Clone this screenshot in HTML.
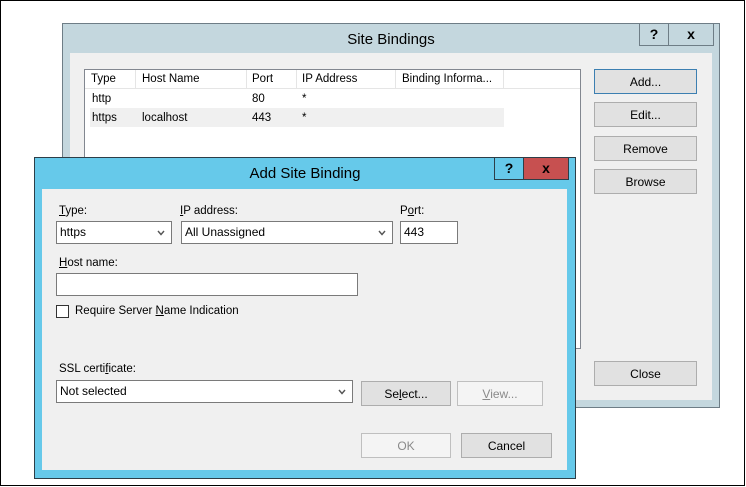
<!DOCTYPE html><html><head><style>
body{margin:0;width:746px;height:487px;background:#fff;position:relative;overflow:hidden;font-family:"Liberation Sans",sans-serif;font-size:11.5px;color:#000}
.a{position:absolute;box-sizing:border-box}
.btn{position:absolute;box-sizing:border-box;background:#e1e1e1;border:1px solid #adadad;text-align:center;font-size:12px}
.in{position:absolute;box-sizing:border-box;background:#fff;border:1px solid #7a7a7a;padding:3px 3px;font-size:12px}
.ar{position:absolute;right:6px;top:8px;width:8px;height:6px}
</style></head><body>
<div class="a" style="left:0;top:0;width:745px;height:486px;border:1px solid #000"></div>
<!-- Site Bindings -->
<div class="a" style="left:62px;top:23px;width:658px;height:385px;background:#c4d7de;border:1px solid #6e7d86"></div>
<div class="a" style="left:62px;top:25px;width:658px;text-align:center;font-size:15px;line-height:30px">Site Bindings</div>
<div class="a" style="left:639px;top:23px;width:30px;height:23px;border:1px solid #6e7d86;text-align:center;font-weight:bold;line-height:20px;font-size:14px">?</div>
<div class="a" style="left:668px;top:23px;width:46px;height:23px;border:1px solid #6e7d86;text-align:center;font-weight:bold;line-height:20px;font-size:14px">x</div>
<div class="a" style="left:70px;top:53px;width:642px;height:347px;background:#f0f0f0"></div>
<div class="a" style="left:84px;top:69px;width:497px;height:280px;background:#fff;border:1px solid #828790"></div>
<div class="a" style="left:85px;top:70px;width:495px;height:19px;border-bottom:1px solid #e5e5e5"></div>
<div class="a" style="left:91px;top:73px">Type</div><div class="a" style="left:135px;top:70px;height:19px;border-left:1px solid #e5e5e5"></div>
<div class="a" style="left:142px;top:73px">Host Name</div><div class="a" style="left:246px;top:70px;height:19px;border-left:1px solid #e5e5e5"></div>
<div class="a" style="left:252px;top:73px">Port</div><div class="a" style="left:296px;top:70px;height:19px;border-left:1px solid #e5e5e5"></div>
<div class="a" style="left:302px;top:73px">IP Address</div><div class="a" style="left:395px;top:70px;height:19px;border-left:1px solid #e5e5e5"></div>
<div class="a" style="left:402px;top:73px">Binding Informa...</div><div class="a" style="left:503px;top:70px;height:19px;border-left:1px solid #e5e5e5"></div>
<div class="a" style="left:92px;top:93px">http</div><div class="a" style="left:252px;top:93px">80</div><div class="a" style="left:302px;top:93px">*</div>
<div class="a" style="left:90px;top:108px;width:414px;height:19px;background:#f0f0f0"></div>
<div class="a" style="left:92px;top:112px">https</div><div class="a" style="left:142px;top:112px">localhost</div><div class="a" style="left:252px;top:112px">443</div><div class="a" style="left:302px;top:112px">*</div>
<div class="btn" style="left:594px;top:69px;width:103px;height:25px;line-height:24px;border-color:#3c7fb1">Add...</div>
<div class="btn" style="left:594px;top:102px;width:103px;height:25px;line-height:24px">Edit...</div>
<div class="btn" style="left:594px;top:136px;width:103px;height:25px;line-height:24px">Remove</div>
<div class="btn" style="left:594px;top:169px;width:103px;height:25px;line-height:24px">Browse</div>
<div class="btn" style="left:594px;top:361px;width:103px;height:25px;line-height:24px">Close</div>
<!-- Add Site Binding -->
<div class="a" style="left:34px;top:157px;width:542px;height:322px;background:#66c9ea;border:1px solid #2d3e48"></div>
<div class="a" style="left:34px;top:159px;width:542px;text-align:center;font-size:15px;line-height:30px">Add Site Binding</div>
<div class="a" style="left:494px;top:157px;width:30px;height:23px;border:1px solid #2d3e48;text-align:center;font-weight:bold;line-height:20px;font-size:14px">?</div>
<div class="a" style="left:523px;top:157px;width:46px;height:23px;border:1px solid #2d3e48;background:#c75050;text-align:center;font-weight:bold;line-height:20px;font-size:14px">x</div>
<div class="a" style="left:42px;top:189px;width:525px;height:281px;background:#f0f0f0"></div>
<div class="a" style="left:59px;top:205px"><u>T</u>ype:</div>
<div class="in" style="left:56px;top:221px;width:116px;height:23px">https<svg class="ar" viewBox="0 0 8 6"><path d="M1 1L4 4.5L7 1" fill="none" stroke="#555" stroke-width="1.4"/></svg></div>
<div class="a" style="left:180px;top:205px"><u>I</u>P address:</div>
<div class="in" style="left:181px;top:221px;width:212px;height:23px">All Unassigned<svg class="ar" viewBox="0 0 8 6"><path d="M1 1L4 4.5L7 1" fill="none" stroke="#555" stroke-width="1.4"/></svg></div>
<div class="a" style="left:400px;top:205px">P<u>o</u>rt:</div>
<div class="in" style="left:400px;top:221px;width:58px;height:23px">443</div>
<div class="a" style="left:59px;top:257px"><u>H</u>ost name:</div>
<div class="in" style="left:56px;top:273px;width:302px;height:23px"></div>
<div class="a" style="left:56px;top:305px;width:13px;height:13px;background:#fff;border:1px solid #333"></div>
<div class="a" style="left:75px;top:305px;font-size:11.5px">Require Server <u>N</u>ame Indication</div>
<div class="a" style="left:59px;top:363px">SSL certi<u>f</u>icate:</div>
<div class="in" style="left:56px;top:380px;width:297px;height:23px">Not selected<svg class="ar" viewBox="0 0 8 6"><path d="M1 1L4 4.5L7 1" fill="none" stroke="#555" stroke-width="1.4"/></svg></div>
<div class="btn" style="left:361px;top:381px;width:90px;height:25px;line-height:24px">Se<u>l</u>ect...</div>
<div class="btn" style="left:457px;top:381px;width:86px;height:25px;line-height:24px;background:#f4f4f4;border-color:#bfbfbf;color:#8a8a8a"><u>V</u>iew...</div>
<div class="btn" style="left:361px;top:433px;width:90px;height:25px;line-height:24px;background:#f4f4f4;border-color:#bfbfbf;color:#8a8a8a">OK</div>
<div class="btn" style="left:461px;top:433px;width:91px;height:25px;line-height:24px">Cancel</div>
</body></html>
